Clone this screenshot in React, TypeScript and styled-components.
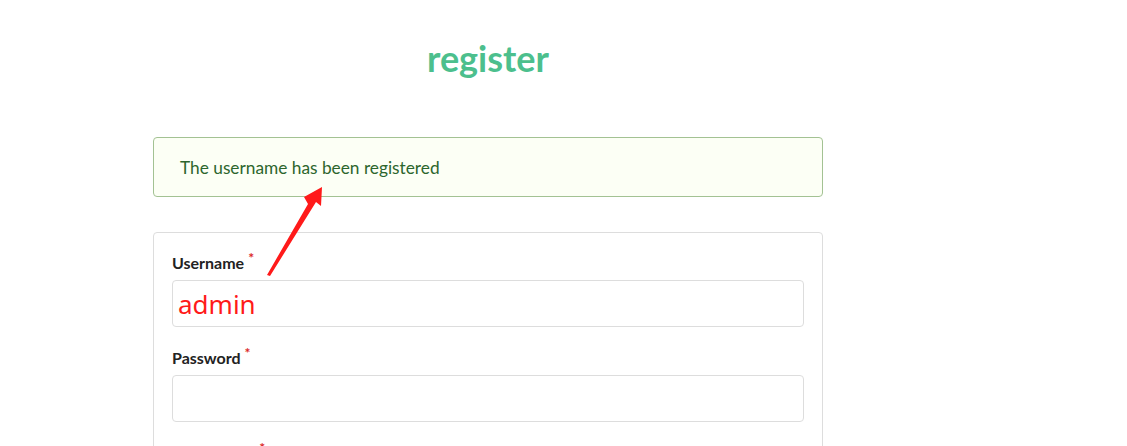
import React from 'react'
import styled, { createGlobalStyle } from 'styled-components'

const GlobalStyle = createGlobalStyle`
    body {
        margin: 0;
        background: #fff;
        font-family: Lato, "Open Sans", "Liberation Sans", sans-serif;
    }
`

const fields = [
    { label: 'Username', value: 'admin' },
    { label: 'Password', value: '' },
    { label: 'Confirm pw', value: '' },
]

const App: React.FC = () => {
    return (
        <>
            <GlobalStyle />
            <StPage>
                <StColumn>
                    <StTitle>register</StTitle>
                    <StMessage>The username has been registered</StMessage>
                    <StForm>
                        {fields.map((f) => (
                            <StField key={f.label}>
                                <StLabel>{f.label}</StLabel>
                                <StInput>{f.value}</StInput>
                            </StField>
                        ))}
                    </StForm>
                    {/* red annotation arrow drawn over the screenshot */}
                    <StArrow width="80" height="110" viewBox="0 0 80 110">
                        <path d="M10 95 L51 24 L47 17 L65 7 L64 26 L59 22 L13 96 Z" fill="#ff1a1a" />
                    </StArrow>
                </StColumn>
            </StPage>
        </>
    )
}

const StPage = styled.div`
    height: 446px;
    overflow: hidden;
    padding-left: 153px;
`

const StColumn = styled.div`
    position: relative;
    width: 670px;
`

const StTitle = styled.h1`
    margin: 0;
    padding-top: 35px;
    height: 137px;
    box-sizing: border-box;
    text-align: center;
    font-size: 36px;
    font-weight: 700;
    color: #4cbf8d;
    line-height: 46px;
`

const StMessage = styled.div`
    height: 60px;
    box-sizing: border-box;
    padding: 0 26px;
    display: flex;
    align-items: center;
    background: #fcfff5;
    border: 1px solid #a3c293;
    border-radius: 4px;
    color: #2c662d;
    font-size: 17.3px;
`

const StForm = styled.div`
    margin-top: 35px;
    border: 1px solid #ddd;
    border-radius: 4px;
    padding: 18px 18px 20px 18px;
    display: flex;
    flex-direction: column;
    gap: 19px;
`

const StField = styled.div`
    display: flex;
    flex-direction: column;
`

const StLabel = styled.label`
    font-size: 16px;
    font-weight: 700;
    color: #222;
    line-height: 24px;
    margin-bottom: 4px;

    &::after {
        content: '*';
        color: #db2828;
        margin-left: 4px;
        position: relative;
        top: -6px;
        font-size: 14px;
    }
`

const StInput = styled.div`
    height: 47px;
    box-sizing: border-box;
    border: 1px solid #ddd;
    border-radius: 4px;
    padding: 0 5px;
    display: flex;
    align-items: center;
    color: #ff1a1a;
    font-family: "Noto Sans", "Noto Sans CJK SC", sans-serif;
    font-size: 26px;
`

const StArrow = styled.svg`
    position: absolute;
    left: 104px;
    top: 180px;
`

export default App
